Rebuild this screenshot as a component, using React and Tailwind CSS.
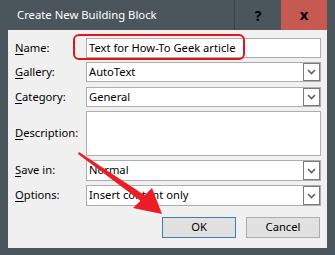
import React from 'react';

// Access-key label: first letter underlined, like a Win32 dialog
function Label({ k, rest }) {
  return (
    <div className="w-[71px] shrink-0 text-[11.2px] text-black">
      <span className="underline underline-offset-2">{k}</span>
      {rest}
    </div>
  );
}

function Chevron() {
  return (
    <svg width="9" height="6" viewBox="0 0 9 6" fill="none">
      <path d="M1 1l3.5 3.5L8 1" stroke="#5f5f5f" strokeWidth="1.6" />
    </svg>
  );
}

function Combo({ value }) {
  return (
    <div className="flex-1 flex h-full bg-white border border-[#adadad]">
      <div className="flex-1 flex items-center pl-[2px] text-[11.2px] text-black">{value}</div>
      <div className="w-[17px] self-stretch border border-[#7a7a7a] flex items-center justify-center">
        <Chevron />
      </div>
    </div>
  );
}

export default function App() {
  return (
    <div
      className="relative w-[335px] h-[255px] bg-[#4b565c] flex flex-col overflow-hidden"
      style={{ fontFamily: '"Noto Sans", "Open Sans", sans-serif' }}
    >
      {/* Title bar */}
      <div className="h-[30px] flex shrink-0">
        <div className="flex-1 flex items-center pl-[17px] text-[11.3px] text-white">
          Create New Building Block
        </div>
        <div className="w-[47px] border-l border-[#3a4247] flex items-center justify-center text-[14px] font-bold text-black">
          ?
        </div>
        <div className="w-[46px] bg-[#c65a50] flex items-center justify-center text-[15px] font-bold text-black pb-[2px]">
          x
        </div>
        <div className="w-[8px]" />
      </div>

      {/* Client area */}
      <div className="flex-1 mx-[8px] mb-[7px] bg-[#f0f0f0] pt-[8px] pl-[7px] pr-[6px] flex flex-col">
        <div className="h-[20px] flex items-center">
          <Label k="N" rest="ame:" />
          <div className="flex-1 h-full bg-white border border-[#adadad] flex items-center pl-[2px] text-[11.2px] text-black">
            Text for How-To Geek article
          </div>
        </div>
        <div className="h-[20px] mt-[4px] flex items-center">
          <Label k="G" rest="allery:" />
          <Combo value="AutoText" />
        </div>
        <div className="h-[20px] mt-[5px] flex items-center">
          <Label k="C" rest="ategory:" />
          <Combo value="General" />
        </div>
        <div className="h-[45px] mt-[4px] flex items-center">
          <Label k="D" rest="escription:" />
          <div className="flex-1 h-full bg-white border border-[#adadad]" />
        </div>
        <div className="h-[21px] mt-[4px] flex items-center">
          <Label k="S" rest="ave in:" />
          <Combo value="Normal" />
        </div>
        <div className="h-[21px] mt-[4px] flex items-center">
          <Label k="O" rest="ptions:" />
          <Combo value="Insert content only" />
        </div>
        <div className="mt-[11px] flex justify-end gap-[10px] mr-[1px]">
          <div className="w-[74px] h-[21px] bg-[#e1e1e1] border border-[#3c7fb1] flex items-center justify-center text-[11.2px] text-black">
            OK
          </div>
          <div className="w-[74px] h-[21px] bg-[#e1e1e1] border border-[#adadad] flex items-center justify-center text-[11.2px] text-black">
            Cancel
          </div>
        </div>
      </div>

      {/* Annotation: red highlight around the name field */}
      <div className="absolute left-[73px] top-[34px] w-[172px] h-[26px] border-2 border-[#e3151b] rounded-[6px]" />

      {/* Annotation: red arrow pointing at OK */}
      <svg className="absolute left-0 top-0" width="335" height="255" viewBox="0 0 335 255">
        <polygon
          points="79,152 144.6,195.2 152,188 162,214 133,208 140.4,200.8 78,154"
          fill="#ec1c24"
        />
      </svg>
    </div>
  );
}
